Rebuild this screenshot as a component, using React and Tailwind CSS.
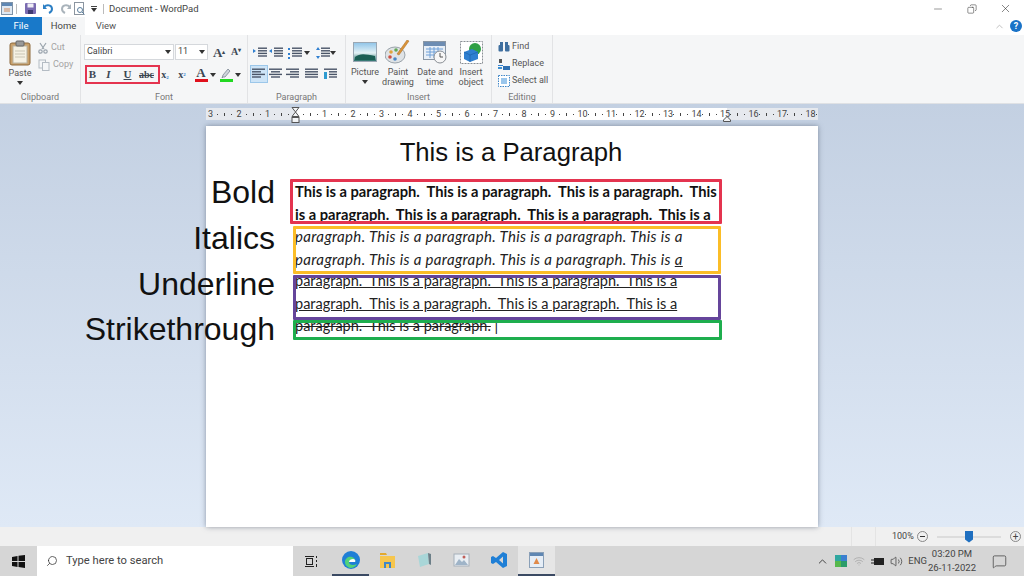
import React from "react";
import { Minus, X, Copy, ChevronUp, MessageSquare, Search, Volume2, Wifi } from "lucide-react";

const ui = "font-['Roboto','Noto_Sans',sans-serif]";

function Caret({ className = "" }) {
  return (
    <svg width="6" height="4" viewBox="0 0 6 4" className={className}>
      <path d="M0 0h6L3 4z" fill="#333" />
    </svg>
  );
}

function Lines({ rows, color = "#4a5568", accent }) {
  // small "text lines" glyph used for paragraph icons
  return (
    <svg width="14" height="12" viewBox="0 0 14 12">
      {rows.map(([x, w], i) => (
        <rect key={i} x={x} y={i * 2.6 + 0.5} width={w} height="1.4" fill={color} />
      ))}
      {accent}
    </svg>
  );
}

function GroupLabel({ children }) {
  return <div className="h-[13px] text-center text-[9px] leading-[15px] text-[#777]">{children}</div>;
}

function Clipboard() {
  return (
    <div className="w-[81px] shrink-0 border-r border-[#e2e3e5] flex flex-col">
      <div className="flex-1 flex pt-[5px] pl-[7px]">
        <div className="w-[26px] flex flex-col items-center">
          <svg width="22" height="26" viewBox="0 0 22 26">
            <rect x="1" y="3" width="20" height="22" rx="2" fill="#c9a06a" stroke="#8d6b3f" />
            <rect x="4" y="6" width="14" height="17" fill="#f5f1e4" stroke="#b9b4a4" />
            <rect x="7" y="1" width="8" height="5" rx="1" fill="#9a9a9a" stroke="#666" />
            <path d="M6 11h10M6 14h10M6 17h10" stroke="#c9c5b5" />
          </svg>
          <div className="text-[9px] leading-[12px] mt-[1px] text-[#555]">Paste</div>
          <Caret className="mt-[2px]" />
        </div>
        <div className="ml-[5px] flex flex-col gap-[4px] pt-[1px]">
          <div className="flex items-center gap-[3px] h-[13px] text-[9px] text-[#a3a3a3]">
            <svg width="10" height="12" viewBox="0 0 10 12" fill="none" stroke="#9aa4ad" strokeWidth="1.2">
              <path d="M2 1l4 6M8 1L4 7" />
              <circle cx="2.5" cy="9.5" r="1.7" />
              <circle cx="7.5" cy="9.5" r="1.7" />
            </svg>
            Cut
          </div>
          <div className="flex items-center gap-[3px] h-[13px] text-[9px] text-[#a3a3a3]">
            <svg width="12" height="12" viewBox="0 0 12 12" fill="#f4f6f8" stroke="#b4bcc4">
              <rect x="1" y="1" width="6.5" height="8" />
              <rect x="4.5" y="3.5" width="6.5" height="8" />
            </svg>
            Copy
          </div>
        </div>
      </div>
      <GroupLabel>Clipboard</GroupLabel>
    </div>
  );
}

function Font() {
  return (
    <div className="w-[167px] shrink-0 border-r border-[#e2e3e5] flex flex-col">
      <div className="flex-1 pl-[3px] pt-[9px]">
        <div className="flex items-center h-[16px]">
          <div className="w-[90px] h-[16px] bg-white border border-[#d5d8dc] flex items-center justify-between pl-[2px] pr-[2px] text-[9px] text-[#444]">
            Calibri
            <Caret />
          </div>
          <div className="w-[33px] h-[16px] ml-[1px] bg-white border border-[#d5d8dc] flex items-center justify-between pl-[2px] pr-[2px] text-[9px] text-[#444]">
            11
            <Caret />
          </div>
          <span className="ml-[5px] w-[16px] font-['Liberation_Serif',serif] font-bold text-[13px] text-[#3f4a56] leading-none">A<sup className="text-[6px]">▴</sup></span>
          <span className="ml-[2px] font-['Liberation_Serif',serif] font-bold text-[10px] text-[#3f4a56] leading-none">A<sup className="text-[6px]">▾</sup></span>
        </div>
        <div className="flex items-center mt-[5px]">
          <div className="w-[75px] h-[19px] ml-[1px] border-[2.5px] border-[#e4344f] flex items-center font-['Liberation_Serif',serif] font-bold text-[#3c4652]">
            <span className="w-[11px] text-center text-[11px]">B</span>
            <span className="w-[11px] ml-[5px] text-center text-[11px] italic">I</span>
            <span className="w-[11px] ml-[8px] text-center text-[11px] underline">U</span>
            <span className="w-[15px] ml-[6px] text-center text-[10px] line-through">abc</span>
          </div>
          <span className="w-[10px] text-center font-['Liberation_Serif',serif] font-bold text-[10px] text-[#3c4652]">x<sub className="text-[5px] text-[#2f7fd0]">2</sub></span>
          <span className="w-[24px] text-center font-['Liberation_Serif',serif] font-bold text-[10px] text-[#3c4652]">x<sup className="text-[5px] text-[#2f7fd0]">2</sup></span>
          <div className="w-[14px] flex flex-col items-center">
            <span className="font-['Liberation_Serif',serif] font-bold text-[13px] leading-[12px] text-[#3c4652]">A</span>
            <div className="w-[13px] h-[3px] bg-[#e0101c]" />
          </div>
          <Caret className="ml-[2px]" />
          <div className="w-[14px] ml-[3px] flex flex-col items-center">
            <svg width="12" height="11" viewBox="0 0 12 11">
              <path d="M3 9l-1 1 1-3 5-6 2 2-5 6z" fill="#cfd5dc" stroke="#7c8794" strokeWidth="0.8" />
            </svg>
            <div className="w-[13px] h-[3px] bg-[#22d822]" />
          </div>
          <Caret className="ml-[2px]" />
        </div>
      </div>
      <GroupLabel>Font</GroupLabel>
    </div>
  );
}

function Paragraph() {
  return (
    <div className="w-[98px] shrink-0 border-r border-[#e2e3e5] flex flex-col">
      <div className="flex-1 pt-[11px]">
        <div className="flex items-center h-[14px] pl-[5px]">
          <Lines rows={[[5, 9], [5, 9], [5, 9], [5, 9]]} accent={<path d="M0 2l3 2-3 2z" fill="#2f7fd0" />} />
          <div className="ml-[2px]"><Lines rows={[[5, 9], [5, 9], [5, 9], [5, 9]]} accent={<path d="M3 2L0 4l3 2z" fill="#2f7fd0" />} /></div>
          <div className="ml-[5px]"><Lines rows={[[4, 10], [4, 10], [4, 10], [4, 10]]} accent={<path d="M0 1h2v2H0zM0 6h2v2H0zM0 10h2v2H0z" fill="#2f7fd0" />} /></div>
          <Caret className="ml-[2px]" />
          <div className="ml-[6px]"><Lines rows={[[5, 9], [5, 9], [5, 9], [5, 9]]} accent={<path d="M2 0l2 3H0zM2 12l2-3H0z" fill="#2f7fd0" />} /></div>
          <Caret />
        </div>
        <div className="flex items-center h-[18px] mt-[5px] pl-[2px]">
          <div className="w-[18px] h-[18px] bg-[#cde4f7] border border-[#9cc7ea] flex items-center justify-center">
            <Lines rows={[[0, 13], [0, 9], [0, 13], [0, 9]]} />
          </div>
          <div className="ml-[1px]"><Lines rows={[[0, 13], [2, 9], [0, 13], [2, 9]]} /></div>
          <div className="ml-[3px]"><Lines rows={[[0, 13], [4, 9], [0, 13], [4, 9]]} /></div>
          <div className="ml-[5px]"><Lines rows={[[0, 13], [0, 13], [0, 13], [0, 13]]} /></div>
          <div className="ml-[5px]"><Lines rows={[[0, 13], [5, 8], [5, 8], [5, 8]]} accent={<rect x="0" y="4" width="3" height="7" fill="#2f9bd0" />} /></div>
        </div>
      </div>
      <GroupLabel>Paragraph</GroupLabel>
    </div>
  );
}

function InsertItem({ label, second, icon, width }) {
  return (
    <div className={`flex flex-col items-center ${width}`}>
      <div className="h-[24px] flex items-center justify-center">{icon}</div>
      <div className="mt-[3px] text-[9px] leading-[10px] text-[#555] text-center whitespace-nowrap">{label}</div>
      {second ? (
        <div className="text-[9px] leading-[10px] text-[#555] text-center">{second}</div>
      ) : (
        <Caret className="mt-[3px]" />
      )}
    </div>
  );
}

function Insert() {
  return (
    <div className="w-[146px] shrink-0 border-r border-[#e2e3e5] flex flex-col">
      <div className="flex-1 pt-[5px] pl-[1px] flex">
        <InsertItem
          label="Picture"
          width="w-[36px]"
          icon={
            <svg width="24" height="20" viewBox="0 0 24 20">
              <defs>
                <linearGradient id="sky" x1="0" y1="0" x2="0" y2="1">
                  <stop offset="0" stopColor="#8fc4e8" />
                  <stop offset="0.55" stopColor="#e4f2f6" />
                  <stop offset="1" stopColor="#1f6a63" />
                </linearGradient>
              </defs>
              <rect x="0.5" y="0.5" width="23" height="19" fill="url(#sky)" stroke="#9aa7b3" />
              <path d="M2 15c5-4 10-3 20-1v4H2z" fill="#1b5f55" />
            </svg>
          }
        />
        <InsertItem
          label="Paint"
          second="drawing"
          width="w-[30px]"
          icon={
            <svg width="26" height="24" viewBox="0 0 26 24">
              <ellipse cx="10" cy="15" rx="10" ry="8" fill="#dfe3e6" stroke="#9aa3aa" />
              <circle cx="6" cy="12" r="1.8" fill="#e0a33b" />
              <circle cx="11" cy="10" r="1.8" fill="#62a956" />
              <circle cx="5" cy="17" r="1.8" fill="#cf4f43" />
              <circle cx="10" cy="19" r="1.8" fill="#4a86c5" />
              <path d="M24 1L14 15l-2-1L22 0z" fill="#d9933a" stroke="#a96c22" strokeWidth="0.5" />
            </svg>
          }
        />
        <InsertItem
          label="Date and"
          second="time"
          width="w-[44px]"
          icon={
            <svg width="24" height="23" viewBox="0 0 24 23">
              <rect x="0.5" y="0.5" width="22" height="18" fill="#e8eff7" stroke="#8a97a5" />
              <rect x="1" y="1" width="21" height="4" fill="#6d8db3" />
              <path d="M3 8h17M3 11h17M3 14h17M7 6v11M11 6v11M15 6v11" stroke="#6fa0d8" />
              <circle cx="17" cy="16" r="6" fill="#f7f7f7" stroke="#8a8f95" />
              <path d="M17 12v4h3" fill="none" stroke="#555" />
            </svg>
          }
        />
        <InsertItem
          label="Insert"
          second="object"
          width="w-[28px]"
          icon={
            <svg width="23" height="23" viewBox="0 0 23 23">
              <rect x="0.5" y="0.5" width="22" height="22" fill="#fff" stroke="#8a8f95" strokeDasharray="2 1" />
              <circle cx="15" cy="8" r="6" fill="#2fa044" />
              <path d="M4 11l8-3 6 3v7l-8 3-6-3z" fill="#2f7fd0" />
              <path d="M4 11l6 3 8-3M10 14v7" fill="none" stroke="#1a5ea6" strokeWidth="0.6" />
            </svg>
          }
        />
      </div>
      <GroupLabel>Insert</GroupLabel>
    </div>
  );
}

function EditRow({ icon, children }) {
  return (
    <div className="h-[17px] flex items-center gap-[2px] text-[9px] text-[#555]">
      <div className="w-[12px] flex justify-center">{icon}</div>
      {children}
    </div>
  );
}

function Editing() {
  return (
    <div className="w-[61px] shrink-0 border-r border-[#e2e3e5] flex flex-col">
      <div className="flex-1 pt-[3px] pl-[6px]">
        <EditRow
          icon={
            <svg width="12" height="11" viewBox="0 0 12 11" fill="#3f6f9f">
              <rect x="0.5" y="4" width="4.5" height="6.5" rx="1" />
              <rect x="7" y="4" width="4.5" height="6.5" rx="1" />
              <rect x="2" y="1" width="3" height="4" />
              <rect x="7" y="1" width="3" height="4" />
            </svg>
          }
        >
          Find
        </EditRow>
        <EditRow
          icon={
            <svg width="12" height="12" viewBox="0 0 12 12">
              <path d="M1 1h3v4H1z" fill="#555" />
              <path d="M0 7h5v1H0z" fill="#2f7fd0" />
              <path d="M5 8h7v4H5z" fill="#2f6fb0" />
              <path d="M0 9h4v2H0z" fill="#3f8fd0" />
            </svg>
          }
        >
          Replace
        </EditRow>
        <EditRow
          icon={
            <svg width="12" height="12" viewBox="0 0 12 12">
              <rect x="0.5" y="0.5" width="11" height="11" fill="#fff" stroke="#3f86c8" strokeDasharray="1.5 1" />
              <rect x="3" y="3" width="6" height="6" fill="#9ac6ec" />
            </svg>
          }
        >
          Select all
        </EditRow>
      </div>
      <GroupLabel>Editing</GroupLabel>
    </div>
  );
}

function TitleBar() {
  return (
    <div className="h-[17px] shrink-0 bg-white flex items-center">
      <svg width="12" height="13" viewBox="0 0 12 13" className="ml-[1px]">
        <rect x="0.5" y="0.5" width="11" height="12" fill="#dfe8f2" stroke="#7f93a8" />
        <rect x="1" y="1" width="10" height="3" fill="#5f87b3" />
        <path d="M3 7h6M3 9h6" stroke="#d08a5a" />
      </svg>
      <div className="ml-[3px] w-px h-[10px] bg-[#bbb]" />
      <svg width="11" height="11" viewBox="0 0 11 11" className="ml-[8px]">
        <rect width="11" height="11" rx="1" fill="#7a6bb0" />
        <rect x="2.5" y="0.5" width="6" height="4" fill="#efeef5" />
        <rect x="3" y="7" width="5" height="4" fill="#3f3a70" />
      </svg>
      <svg width="11" height="11" viewBox="0 0 11 11" fill="none" className="ml-[7px]">
        <path d="M1 4c3-3 8-2 8 2 0 2-1 3-3 4" stroke="#2c7fc4" strokeWidth="2" />
        <path d="M0 1v5h4z" fill="#2c7fc4" />
      </svg>
      <svg width="11" height="11" viewBox="0 0 11 11" fill="none" className="ml-[6px]">
        <path d="M10 4C7 1 2 2 2 6c0 2 1 3 3 4" stroke="#a9b3bb" strokeWidth="2" />
        <path d="M11 1v5H7z" fill="#a9b3bb" />
      </svg>
      <svg width="11" height="13" viewBox="0 0 11 13" fill="none" className="ml-[3px]">
        <rect x="0.5" y="0.5" width="9" height="12" fill="#fff" stroke="#8b95a0" />
        <circle cx="6" cy="8" r="2.5" stroke="#5a7d9c" />
        <path d="M8 10l2.5 2.5" stroke="#5a7d9c" />
      </svg>
      <div className="ml-[6px] flex flex-col items-center gap-[1px]">
        <div className="w-[6px] h-px bg-[#444]" />
        <Caret />
      </div>
      <div className="ml-[6px] w-px h-[10px] bg-[#bbb]" />
      <div className="ml-[5px] pt-[1px] text-[9.5px] text-[#444]">Document - WordPad</div>
      <div className="flex-1" />
      <Minus size={12} strokeWidth={1} className="text-[#333]" />
      <Copy size={10} strokeWidth={1.2} className="ml-[23px] text-[#222] -scale-x-100" />
      <X size={13} strokeWidth={1} className="ml-[22px] mr-[12px] text-[#222]" />
    </div>
  );
}

function Tabs() {
  return (
    <div className="h-[18px] shrink-0 bg-white flex items-stretch text-[9.5px]">
      <div className="w-[42px] bg-[#1979c9] text-white flex items-center justify-center">File</div>
      <div className="w-[43px] bg-[#f5f6f7] text-[#444] flex items-center justify-center">Home</div>
      <div className="w-[42px] text-[#555] flex items-center justify-center">View</div>
      <div className="flex-1" />
      <ChevronUp size={11} className="text-[#bbb] self-center" />
      <div className="ml-[5px] mr-[2px] self-center w-[12px] h-[12px] rounded-full bg-[#1a73c7] text-white text-[9px] font-bold leading-[12px] text-center">?</div>
    </div>
  );
}

function Ruler() {
  const nums = [3, 2, 1, 0, 1, 2, 3, 4, 5, 6, 7, 8, 9, 10, 11, 12, 13, 14, 15, 16, 17, 18];
  return (
    <div className="relative h-[12px] w-[612px] mt-[4px] bg-[#e6e9ee] flex items-center">
      <div className="absolute left-[88px] w-[433px] h-[12px] bg-white" />
      <div className="relative w-[612px] overflow-hidden flex items-center pl-[1px]">
        {nums.map((n, i) => (
          <div key={i} className="w-[28.5px] shrink-0 flex items-center">
            <span className="w-[7px] text-center text-[9px] leading-none text-[#444]">{i === 3 ? "" : n}</span>
            <span className="w-[7px] flex justify-center"><span className="w-px h-px bg-[#444]" /></span>
            <span className="w-[7px] flex justify-center"><span className="w-px h-[3px] bg-[#444]" /></span>
            <span className="w-[7px] flex justify-center"><span className="w-px h-px bg-[#444]" /></span>
          </div>
        ))}
      </div>
      {/* indent markers */}
      <svg width="9" height="16" viewBox="0 0 9 16" className="absolute left-[85px] top-[-1px]" fill="#f4f6f8" stroke="#555">
        <path d="M1 .5h7L4.5 5zM1 9.5L4.5 5 8 9.5z" />
        <rect x="1" y="10.5" width="7" height="5" />
      </svg>
      <svg width="8" height="6" viewBox="0 0 8 6" className="absolute left-[517px] top-[8px]" fill="#f4f6f8" stroke="#555">
        <path d="M4 .5L7.5 4v1.5h-7V4z" />
      </svg>
    </div>
  );
}

const Bold = ({ children }) => <div className="font-bold text-[14.7px] text-[#111]">{children}</div>;

function Page() {
  return (
    <div className="relative mt-[6px] w-[612px] flex-1 bg-white shadow-[0_0_5px_rgba(70,80,100,0.55)] font-['Lato','Carlito',sans-serif] text-[#222]">
      <div className="pt-[11px] pr-[2px] text-center font-['Liberation_Sans',sans-serif] text-[25.7px] leading-[30px] text-[#111]">This is a Paragraph</div>
      <div className="pl-[89px] pt-[13px] text-[14.5px] leading-[22.5px] whitespace-pre">
        <Bold>This is a paragraph.  This is a paragraph.  This is a paragraph.  This</Bold>
        <Bold>is a paragraph.  This is a paragraph.  This is a paragraph.  This is a</Bold>
        <div className="italic text-[15px] tracking-[0.35px]">paragraph. This is a paragraph. This is a paragraph. This is a</div>
        <div className="italic text-[15px] tracking-[0.35px]">paragraph. This is a paragraph. This is a paragraph. This is <span className="underline">a</span></div>
        <div className="underline">paragraph.  This is a paragraph.  This is a paragraph.  This is a</div>
        <div className="underline">paragraph.  This is a paragraph.  This is a paragraph.  This is a</div>
        <div><span className="line-through">paragraph.  This is a paragraph.</span> <span className="text-[#111]">|</span></div>
      </div>
      {/* coloured annotation boxes */}
      <div className="absolute left-[84px] top-[53px] w-[432px] h-[45px] border-[3px] rounded-[1px] border-[#e4344f]" />
      <div className="absolute left-[87px] top-[100px] w-[428px] h-[48px] border-[3px] rounded-[1px] border-[#fbbd27]" />
      <div className="absolute left-[87px] top-[149px] w-[428px] h-[45px] border-[3px] rounded-[1px] border-[#65459b]" />
      <div className="absolute left-[87px] top-[194px] w-[429px] h-[20px] border-[3px] rounded-[1px] border-[#1eae4e]" />
    </div>
  );
}

function Annotations() {
  const cls = "absolute right-[749px] font-['Liberation_Sans',sans-serif] text-[32px] leading-[36px] text-[#111]";
  return (
    <>
      <div className={`${cls} top-[70px]`}>Bold</div>
      <div className={`${cls} top-[116px]`}>Italics</div>
      <div className={`${cls} top-[162px]`}>Underline</div>
      <div className={`${cls} top-[207px]`}>Strikethrough</div>
    </>
  );
}

function StatusBar() {
  return (
    <div className="h-[19px] shrink-0 bg-[#f0f0f0] flex items-center text-[9px] text-[#444]">
      <div className="w-[852px] h-full border-r border-[#e4e4e4]" />
      <div className="w-[24px] h-full border-r border-[#e4e4e4]" />
      <div className="ml-[16px] w-[20px] text-center">100%</div>
      <div className="ml-[5px] w-[11px] h-[11px] rounded-full border border-[#888] flex items-center justify-center">
        <div className="w-[5px] h-px bg-[#333]" />
      </div>
      <div className="ml-[9px] w-[64px] h-[2px] bg-[#dcdcdc] flex items-center justify-center">
        <div className="w-[8px] h-[12px] bg-[#1f6fc0] [clip-path:polygon(0_0,100%_0,100%_75%,50%_100%,0_75%)]" />
      </div>
      <div className="ml-[9px] w-[11px] h-[11px] rounded-full border border-[#888] flex items-center justify-center text-[10px] leading-none">+</div>
    </div>
  );
}

function TaskIcon({ children, active }) {
  return (
    <div className={`w-[37px] h-full flex items-center justify-center border-b-[2px] ${active ? "border-[#3b4a63]" : "border-transparent"}`}>
      {children}
    </div>
  );
}

function Taskbar() {
  return (
    <div className="h-[30px] shrink-0 bg-[#d6d6d6] flex items-stretch text-[#333]">
      <div className="w-[37px] flex items-center justify-center">
        <svg width="13" height="13" viewBox="0 0 13 13" fill="#111">
          <path d="M0 2l5.5-1v5H0zM6.5 .8L13 0v6H6.5zM0 7h5.5v5L0 11zM6.5 7H13v6l-6.5-1z" />
        </svg>
      </div>
      <div className="w-[256px] bg-white flex items-center pl-[9px] text-[11.2px] text-[#444]">
        <Search size={12} strokeWidth={1.5} className="-scale-x-100 text-[#333]" />
        <span className="ml-[8px] pt-[1px]">Type here to search</span>
      </div>
      <div className="w-[36px] flex items-center justify-center">
        <svg width="13" height="13" viewBox="0 0 13 13" fill="none" stroke="#222">
          <rect x="1.5" y="3.5" width="6" height="6" />
          <path d="M0 1.5h9M0 11.5h9M11.5 1v2M11.5 5v2M11.5 9v3" />
        </svg>
      </div>
      <div className="w-[3px]" />
      <TaskIcon active>
        <svg width="18" height="18" viewBox="0 0 18 18">
          <circle cx="9" cy="9" r="9" fill="#1f7fd6" />
          <path d="M3 11c0-4 4-6 7-5 3 1 4 4 3 5H7c0 3 4 4 8 2-2 4-7 5-9 3-2-1-3-3-3-5z" fill="#52d27a" />
          <path d="M7 11h6c1-1 0-3-2-3-2 0-4 1-4 3z" fill="#fff" />
        </svg>
      </TaskIcon>
      <TaskIcon>
        <svg width="17" height="15" viewBox="0 0 17 15">
          <path d="M1 0h6l1 2H1z" fill="#e2a92f" />
          <rect x="1" y="3" width="15" height="12" fill="#f6c64e" />
          <rect x="5" y="9" width="7" height="6" fill="#3f86c8" />
          <rect x="7" y="11" width="3" height="4" fill="#f6c64e" />
        </svg>
      </TaskIcon>
      <TaskIcon>
        <svg width="16" height="16" viewBox="0 0 16 16">
          <path d="M1 4l10-3 1 11-9 3z" fill="#a9d6d8" />
          <path d="M11 1l3 1v11l-2-1z" fill="#6c7f88" />
        </svg>
      </TaskIcon>
      <TaskIcon>
        <svg width="17" height="15" viewBox="0 0 17 15">
          <rect x="1" y="1" width="15" height="12" fill="#e9eef3" stroke="#a6b0ba" />
          <path d="M2 12l4-6 3 3 2-2 4 5z" fill="#9fb4c8" />
          <circle cx="11" cy="4" r="1.5" fill="#c0605a" />
        </svg>
      </TaskIcon>
      <TaskIcon>
        <svg width="18" height="18" viewBox="0 0 18 18">
          <path d="M13 1l4 2v12l-4 2-7-6-3 2-2-1V6l2-1 3 2zM13 5.5L9 9l4 3.5z" fill="#1f7fd6" />
        </svg>
      </TaskIcon>
      <div className="ml-[1px] w-[37px] bg-[#e6e6e6] border-b-[2px] border-[#3b4a63] flex items-center justify-center">
        <svg width="15" height="16" viewBox="0 0 15 16">
          <rect x="0.5" y="0.5" width="14" height="15" fill="#e6eef7" stroke="#8aa0b8" />
          <rect x="1" y="1" width="13" height="3" fill="#5f87b3" />
          <path d="M7.5 6l3 6h-6z" fill="#e08a4a" />
        </svg>
      </div>
      <div className="flex-1" />
      <div className="flex items-center">
        <ChevronUp size={13} strokeWidth={1.5} className="text-[#222]" />
        <svg width="12" height="12" viewBox="0 0 12 12" className="ml-[6px]">
          <rect width="6" height="6" fill="#2fa7a0" />
          <rect x="6" width="6" height="6" fill="#3b7fd0" />
          <rect y="6" width="6" height="6" fill="#56b84c" />
          <rect x="6" y="6" width="6" height="6" fill="#2b9c6a" />
        </svg>
        <Wifi size={12} strokeWidth={1.2} className="ml-[6px] text-[#999]" />
        <svg width="13" height="10" viewBox="0 0 13 10" className="ml-[6px]">
          <rect x="3" y="2" width="10" height="7" fill="#222" />
          <path d="M0 4h3M0 7h3" stroke="#222" />
        </svg>
        <Volume2 size={13} strokeWidth={1.3} className="ml-[6px] text-[#333]" />
        <div className="ml-[5px] text-[9.5px] text-[#444]">ENG</div>
        <div className="w-[50px] text-center text-[9.5px] leading-[14px] text-[#444]">
          <div>03:20 PM</div>
          <div>26-11-2022</div>
        </div>
        <MessageSquare size={15} strokeWidth={1.1} className="ml-[15px] mr-[17px] text-[#333]" />
      </div>
    </div>
  );
}

export default function App() {
  return (
    <div className={`w-[1024px] h-[576px] overflow-hidden flex flex-col ${ui}`}>
      <TitleBar />
      <Tabs />
      <div className="h-[69px] shrink-0 bg-[#f5f6f7] border-b border-[#dfe1e4] flex">
        <Clipboard />
        <Font />
        <Paragraph />
        <Insert />
        <Editing />
      </div>
      <div className="relative flex-1 min-h-0 bg-gradient-to-b from-[#c3d0e2] to-[#dfe9f6] flex flex-col items-center">
        <Ruler />
        <Page />
        <Annotations />
      </div>
      <StatusBar />
      <Taskbar />
    </div>
  );
}
